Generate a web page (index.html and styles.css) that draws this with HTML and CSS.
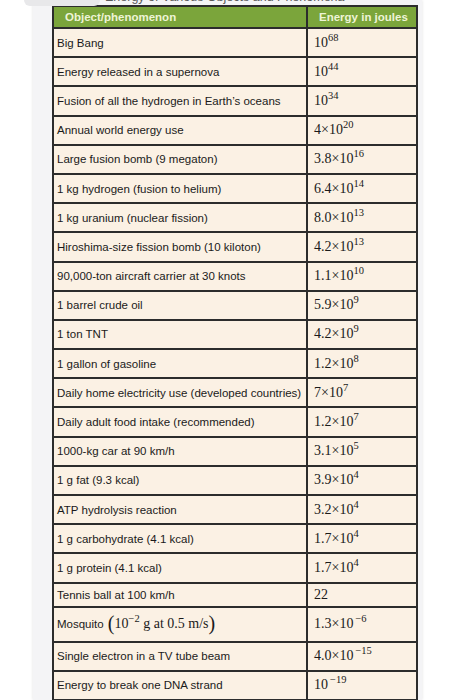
FILE: index.html
```html
<!DOCTYPE html>
<html>
<head>
<meta charset="utf-8">
<link rel="stylesheet" href="styles.css">
</head>
<body>
<div class="tab"></div>
<div class="card">
  <div class="caption">Energy of Various Objects and Phenomena</div>
  <table class="energy">
    <thead>
      <tr><th class="c1">Object/phenomenon</th><th class="c2">Energy in joules</th></tr>
    </thead>
    <tbody>
      <tr><td>Big Bang</td><td class="v">10<sup>68</sup></td></tr>
      <tr><td>Energy released in a supernova</td><td class="v">10<sup>44</sup></td></tr>
      <tr><td>Fusion of all the hydrogen in Earth’s oceans</td><td class="v">10<sup>34</sup></td></tr>
      <tr><td>Annual world energy use</td><td class="v">4×10<sup>20</sup></td></tr>
      <tr><td>Large fusion bomb (9 megaton)</td><td class="v">3.8×10<sup>16</sup></td></tr>
      <tr><td>1 kg hydrogen (fusion to helium)</td><td class="v">6.4×10<sup>14</sup></td></tr>
      <tr><td>1 kg uranium (nuclear fission)</td><td class="v">8.0×10<sup>13</sup></td></tr>
      <tr><td>Hiroshima-size fission bomb (10 kiloton)</td><td class="v">4.2×10<sup>13</sup></td></tr>
      <tr><td>90,000-ton aircraft carrier at 30 knots</td><td class="v">1.1×10<sup>10</sup></td></tr>
      <tr><td>1 barrel crude oil</td><td class="v">5.9×10<sup>9</sup></td></tr>
      <tr><td>1 ton TNT</td><td class="v">4.2×10<sup>9</sup></td></tr>
      <tr><td>1 gallon of gasoline</td><td class="v">1.2×10<sup>8</sup></td></tr>
      <tr><td>Daily home electricity use (developed countries)</td><td class="v">7×10<sup>7</sup></td></tr>
      <tr><td>Daily adult food intake (recommended)</td><td class="v">1.2×10<sup>7</sup></td></tr>
      <tr><td>1000-kg car at 90 km/h</td><td class="v">3.1×10<sup>5</sup></td></tr>
      <tr><td>1 g fat (9.3 kcal)</td><td class="v">3.9×10<sup>4</sup></td></tr>
      <tr><td>ATP hydrolysis reaction</td><td class="v">3.2×10<sup>4</sup></td></tr>
      <tr><td>1 g carbohydrate (4.1 kcal)</td><td class="v">1.7×10<sup>4</sup></td></tr>
      <tr><td>1 g protein (4.1 kcal)</td><td class="v">1.7×10<sup>4</sup></td></tr>
      <tr class="short"><td>Tennis ball at 100 km/h</td><td class="v">22</td></tr>
      <tr class="tall"><td>Mosquito <span class="math"><span class="paren">(</span>10<sup>−2</sup> g at 0.5 m/s<span class="paren">)</span></span></td><td class="v">1.3×10<sup class="neg">−6</sup></td></tr>
      <tr><td>Single electron in a TV tube beam</td><td class="v">4.0×10<sup class="neg">−15</sup></td></tr>
      <tr><td>Energy to break one DNA strand</td><td class="v">10<sup class="neg">−19</sup></td></tr>
    </tbody>
  </table>
</div>
</body>
</html>
```
FILE: styles.css
```css
html, body {
  margin: 0;
  padding: 0;
  background: #ffffff;
}
body {
  width: 454px;
  height: 700px;
  overflow: hidden;
  position: relative;
  font-family: "Liberation Sans", Arial, sans-serif;
}
.tab {
  position: absolute;
  left: 24px;
  top: -6px;
  width: 76px;
  height: 12px;
  background: #e8e8ea;
  border-radius: 6px;
  z-index: 2;
}
.card {
  margin-left: 33px;
  width: 389px;
  height: 700px;
  background: #f4f4f6;
  box-shadow: 0 0 3px rgba(0, 0, 0, 0.12);
  padding-left: 19px;
  box-sizing: border-box;
  overflow: hidden;
}
.caption {
  height: 13px;
  margin-top: -9px;
  margin-bottom: 1px;
  font-size: 12.5px;
  line-height: 13px;
  color: #5a5a5a;
  padding-left: 53px;
  white-space: nowrap;
}
.energy {
  border-collapse: collapse;
  width: 366px;
  table-layout: fixed;
  background: #fbf1e4;
}
.energy th, .energy td {
  border: 2px solid #2c2c2c;
  padding: 0;
  vertical-align: middle;
  text-align: left;
  white-space: nowrap;
}
.energy .c1 { width: 241px; }
.energy th {
  background: #7ba53b;
  color: #eef4d6;
  font-size: 11.5px;
  font-weight: bold;
  height: 20px;
  padding-left: 11px;
}
.energy td {
  height: 27.2px;
  font-size: 11.5px;
  color: #1a1a1a;
  padding-left: 3px;
}
.energy tr.short td { height: 22px; }
.energy tr.tall td { height: 33px; }
.energy td.v {
  font-family: "Liberation Serif", "Times New Roman", serif;
  font-size: 14px;
  padding-left: 6px;
}
.energy sup {
  font-size: 10.5px;
  vertical-align: 6px;
  line-height: 0;
}
.energy sup.neg {
  margin-left: 2px;
}
.math {
  font-family: "Liberation Serif", "Times New Roman", serif;
  font-size: 14px;
  margin-left: 1px;
}
.math .paren {
  font-size: 20px;
  vertical-align: -2px;
  line-height: 0;
}
```
